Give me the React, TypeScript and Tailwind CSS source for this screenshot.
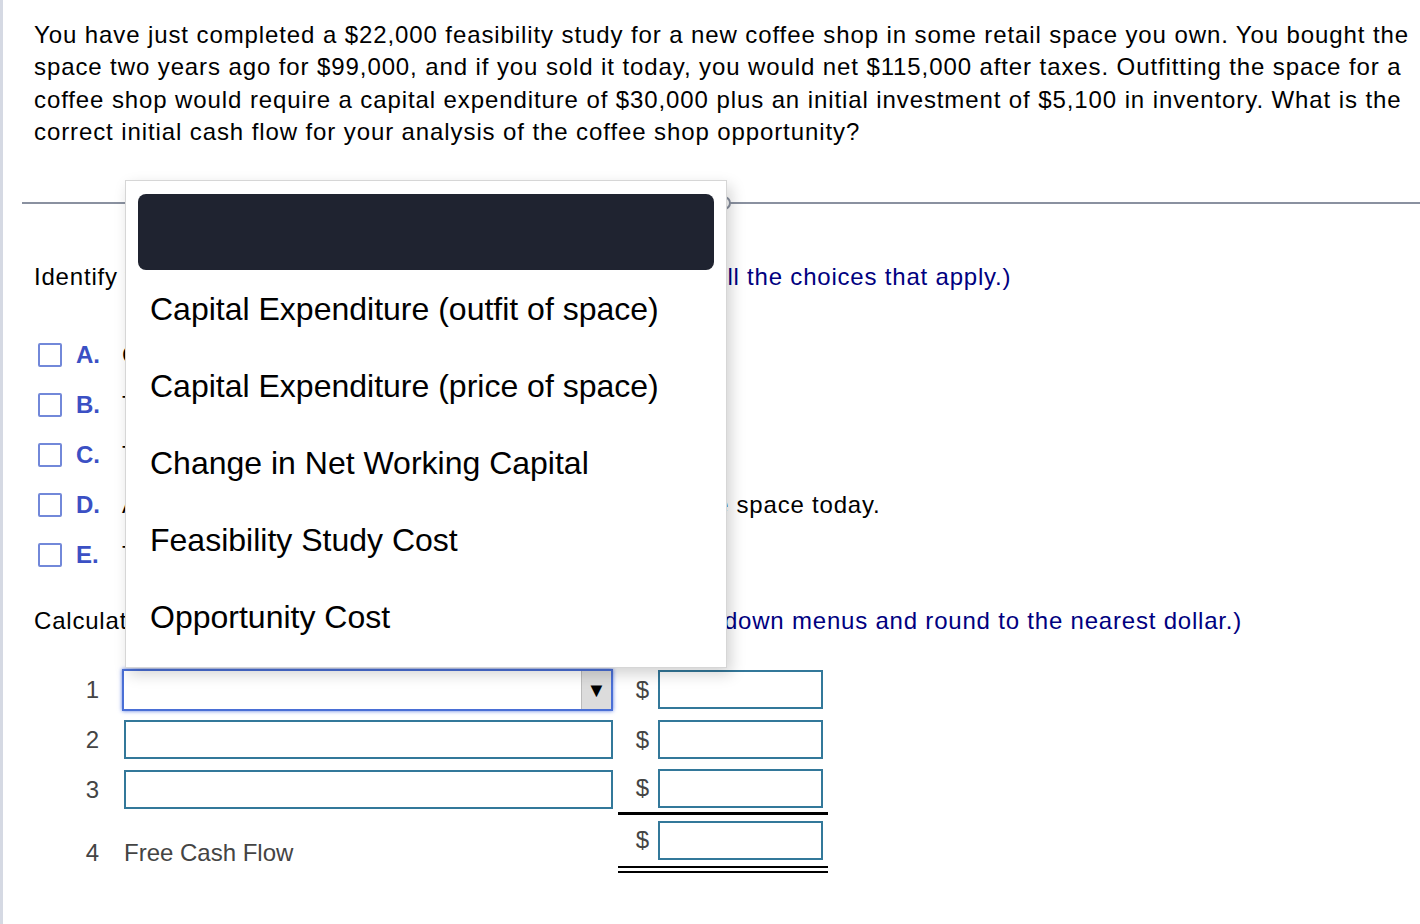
import React from 'react';

const options = [
  'Capital Expenditure (outfit of space)',
  'Capital Expenditure (price of space)',
  'Change in Net Working Capital',
  'Feasibility Study Cost',
  'Opportunity Cost',
];

const choices = [
  { key: 'A.', text: 'Capital expenditure of $30,000 to outfit the space.' },
  { key: 'B.', text: 'The $99,000 paid for the space two years ago.' },
  { key: 'C.', text: 'The $5,100 initial investment in inventory.' },
  { key: 'D.', text: 'After-tax proceeds of $115,000 from selling the entire space today.' },
  { key: 'E.', text: 'The $22,000 cost of the feasibility study.' },
];

function Checkbox() {
  return <span className="inline-block w-[24px] h-[24px] border-2 border-[#7288d9] rounded-[2px] bg-white" />;
}

function AmountBox() {
  return <div className="w-[165px] h-[39px] border-2 border-[#33789a] bg-white" />;
}

export default function App() {
  return (
    <div
      className="relative w-[1420px] h-[924px] overflow-hidden bg-white border-l-[3px] border-[#d5d9e3] text-black tracking-[0.8px]"
      style={{ fontFamily: '"Liberation Sans", Arial, sans-serif' }}
    >
      {/* question */}
      <p className="pl-[31px] pt-[19px] text-[24px] leading-[32.4px] whitespace-nowrap tracking-[0.9px]">
        You have just completed a $22,000 feasibility study for a new coffee shop in some retail space you own. You bought the
        <br />
        space two years ago for $99,000, and if you sold it today, you would net $115,000 after taxes. Outfitting the space for a
        <br />
        coffee shop would require a capital expenditure of $30,000 plus an initial investment of $5,100 in inventory. What is the
        <br />
        correct initial cash flow for your analysis of the coffee shop opportunity?
      </p>

      {/* divider */}
      <div className="relative mt-[53px] ml-[19px] h-[2px] bg-[#8a91a0]">
        <span className="absolute left-[679px] top-[-6px] w-[30px] h-[14px] rounded-full border-2 border-[#8a91a0] bg-white" />
      </div>

      {/* part 1 */}
      <p className="pl-[31px] mt-[57px] text-[24px] leading-[32px] whitespace-nowrap">
        Identify the incremental cash flows for the analysis.{' '}
        <span className="text-[#000080]">(Select all the choices that apply.)</span>
      </p>

      <div className="mt-[37px] pl-[35px] flex flex-col">
        {choices.map((c) => (
          <div key={c.key} className="h-[50px] flex items-center whitespace-nowrap">
            <Checkbox />
            <span className="ml-[14px] w-[46px] text-[24px] font-bold text-[#3b50c4] tracking-normal">{c.key}</span>
            <span className="text-[24px]">{c.text}</span>
          </div>
        ))}
      </div>

      {/* part 2 */}
      <p className="pl-[31px] mt-[25px] text-[24px] leading-[32px] whitespace-nowrap">
        Calculate the initial cash flow amount.{' '}
        <span className="text-[#000080]">(Select from the drop-down menus and round to the nearest dollar.)</span>
      </p>

      <div className="mt-[28px] flex flex-col text-[24px] text-[#444] tracking-normal">
        {[1, 2, 3].map((n) => (
          <div key={n} className="h-[50px] flex items-center">
            <span className="w-[100px] pr-[4px] text-right">{n}</span>
            <div className="ml-[21px] w-[489px] flex items-center">
              {n === 1 ? (
                <div className="ml-[-2px] w-[495px] h-[42px] border-2 border-[#4a6fd6] shadow-[0_0_4px_#5b7be0] bg-white flex justify-end">
                  <div className="w-[30px] h-full bg-[#dcdcdc] border-l border-[#bbb] flex items-center justify-center text-[20px] text-black">
                    ▼
                  </div>
                </div>
              ) : (
                <div className="w-[489px] h-[39px] border-2 border-[#33789a] bg-white" />
              )}
            </div>
            <div className={`ml-[5px] w-[210px] h-[50px] flex items-center ${n === 3 ? 'border-b-[3px] border-black' : ''}`}>
              <span className="w-[40px] text-right pr-[9px]">$</span>
              <AmountBox />
            </div>
          </div>
        ))}
        <div className="h-[58px] flex items-center">
          <span className="w-[100px] pr-[4px] text-right self-end pb-[2px]">4</span>
          <span className="ml-[21px] w-[489px] self-end pb-[2px]">Free Cash Flow</span>
          <div className="ml-[5px] w-[210px] h-[58px] flex items-center border-b-[7px] border-double border-black">
            <span className="w-[40px] text-right pr-[9px]">$</span>
            <AmountBox />
          </div>
        </div>
      </div>

      {/* dropdown list open over the page */}
      <div className="absolute left-[122px] top-[180px] w-[602px] h-[488px] bg-white border border-[#d6d6d6] shadow-[4px_6px_14px_rgba(0,0,0,0.18)] tracking-normal">
        <div className="mx-[12px] mt-[13px] h-[76px] rounded-[8px] bg-[#1f2330]" />
        <ul className="pl-[24px]">
          {options.map((o) => (
            <li key={o} className="h-[77px] flex items-center text-[32px]">
              {o}
            </li>
          ))}
        </ul>
      </div>
    </div>
  );
}
